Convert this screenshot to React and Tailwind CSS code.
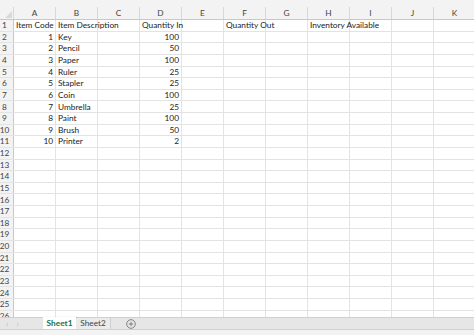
import React from "react";

const cols = ["A", "B", "C", "D", "E", "F", "G", "H", "I", "J", "K"];
const data = {
  1: { A: ["Item Code", "l"], B: ["Item Description", "l"], D: ["Quantity In", "l"], F: ["Quantity Out", "l"], H: ["Inventory Available", "l"] },
  2: { A: ["1", "r"], B: ["Key", "l"], D: ["100", "r"] },
  3: { A: ["2", "r"], B: ["Pencil", "l"], D: ["50", "r"] },
  4: { A: ["3", "r"], B: ["Paper", "l"], D: ["100", "r"] },
  5: { A: ["4", "r"], B: ["Ruler", "l"], D: ["25", "r"] },
  6: { A: ["5", "r"], B: ["Stapler", "l"], D: ["25", "r"] },
  7: { A: ["6", "r"], B: ["Coin", "l"], D: ["100", "r"] },
  8: { A: ["7", "r"], B: ["Umbrella", "l"], D: ["25", "r"] },
  9: { A: ["8", "r"], B: ["Paint", "l"], D: ["100", "r"] },
  10: { A: ["9", "r"], B: ["Brush", "l"], D: ["50", "r"] },
  11: { A: ["10", "r"], B: ["Printer", "l"], D: ["2", "r"] },
};

export default function App() {
  const rows = Array.from({ length: 26 }, (_, i) => i + 1);
  return (
    <div className="w-[474px] h-[335px] overflow-hidden bg-white text-[8.3px] text-[#222] flex flex-col" style={{ fontFamily: "Lato, 'Open Sans', sans-serif" }}>
      <div className="h-[7px] bg-[#f3f3f3] shrink-0" />
      <div className="flex h-[13px] shrink-0 bg-[#f3f3f3] border-b border-[#c8c8c8] text-[#444]">
        <div className="w-[14px] shrink-0 border-r border-[#d8d8d8] relative">
          <svg className="absolute right-[1px] bottom-[1px]" width="7" height="7" viewBox="0 0 7 7">
            <polygon points="7,0 7,7 0,7" fill="#d9d9d9" />
          </svg>
        </div>
        {cols.map((c) => (
          <div key={c} className="w-[42px] shrink-0 border-r border-[#d8d8d8] flex items-center justify-center leading-none pt-[1px]">
            {c}
          </div>
        ))}
      </div>
      <div className="h-[297px] overflow-hidden shrink-0">
        {rows.map((r) => (
          <div key={r} className="flex h-[11.64px] border-b border-[#e3e3e3]">
            <div className="w-[14px] shrink-0 bg-[#f3f3f3] border-r border-[#c8c8c8] flex items-center justify-center pr-[4px] text-[#444] leading-none">
              {r}
            </div>
            {cols.map((c) => {
              const cell = data[r] && data[r][c];
              return (
                <div key={c} className={`w-[42px] shrink-0 border-r border-[#e3e3e3] flex items-center leading-none whitespace-nowrap ${cell && cell[1] === "r" ? "justify-end pr-[2px]" : "justify-start pl-[2px]"} ${cell && cell[1] === "l" ? "overflow-visible z-10" : "overflow-hidden"}`}>
                  {cell ? cell[0] : ""}
                </div>
              );
            })}
          </div>
        ))}
      </div>
      <div className="h-[12px] shrink-0 bg-[#e6e6e6] border-t border-[#d0d0d0] flex items-stretch">
        <div className="w-[43px] flex items-center gap-[8px] pl-[6px] text-[#c4c4c4] text-[9px] leading-none">
          <span>‹</span>
          <span>›</span>
        </div>
        <div className="w-[33px] bg-white flex items-center justify-center font-bold text-[#217346] -mt-[1px] shadow-[1px_0_1px_rgba(0,0,0,0.15)]">
          Sheet1
        </div>
        <div className="w-[35px] bg-[#ebebeb] flex items-center justify-center text-[#444] border-r border-[#cfcfcf]">
          Sheet2
        </div>
        <div className="w-[40px] flex items-center justify-center">
          <svg width="10" height="10" viewBox="0 0 10 10">
            <circle cx="5" cy="5" r="4.3" fill="none" stroke="#777" strokeWidth="0.9" />
            <path d="M5 2.8v4.4M2.8 5h4.4" stroke="#777" strokeWidth="0.9" />
          </svg>
        </div>
      </div>
      <div className="flex-1 bg-[#f3f3f3] border-t border-[#d0d0d0]" />
    </div>
  );
}
